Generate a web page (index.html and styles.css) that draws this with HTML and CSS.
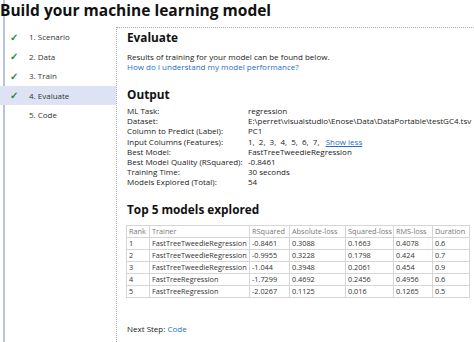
FILE: index.html
```html
<!DOCTYPE html>
<html>
<head>
<meta charset="utf-8">
<link rel="stylesheet" href="styles.css">
</head>
<body>
<div class="page">
  <h1 class="title">Build your machine learning model</h1>
  <div class="main">
    <nav class="steps">
      <div class="step"><span class="check">&#10003;</span><span>1. Scenario</span></div>
      <div class="step"><span class="check">&#10003;</span><span>2. Data</span></div>
      <div class="step"><span class="check">&#10003;</span><span>3. Train</span></div>
      <div class="step active"><span class="check">&#10003;</span><span>4. Evaluate</span></div>
      <div class="step"><span class="check"></span><span>5. Code</span></div>
    </nav>
    <section class="panel">
      <h2 class="h-eval">Evaluate</h2>
      <p class="intro">Results of training for your model can be found below.<br><a class="link" href="#">How do I understand my model performance?</a></p>
      <h2 class="h-out">Output</h2>
      <div class="kv">
        <span>ML Task:</span><span>regression</span>
        <span>Dataset:</span><span>E:\perret\visualstudio\Enose\Data\DataPortable\testGC4.tsv</span>
        <span>Column to Predict (Label):</span><span>PC1</span>
        <span>Input Columns (Features):</span><span>1, &nbsp;2, &nbsp;3, &nbsp;4, &nbsp;5, &nbsp;6, &nbsp;7, &nbsp;&nbsp;<a class="link ul" href="#">Show less</a></span>
        <span>Best Model:</span><span>FastTreeTweedieRegression</span>
        <span>Best Model Quality (RSquared):</span><span>-0.8461</span>
        <span>Training Time:</span><span>30 seconds</span>
        <span>Models Explored (Total):</span><span>54</span>
      </div>
      <h2 class="h-top">Top 5 models explored</h2>
      <table class="models">
        <colgroup>
          <col class="c-rank"><col class="c-tr"><col class="c-rs"><col class="c-al"><col class="c-sl"><col class="c-rms"><col class="c-du">
        </colgroup>
        <thead>
          <tr><th>Rank</th><th>Trainer</th><th>RSquared</th><th>Absolute-loss</th><th>Squared-loss</th><th>RMS-loss</th><th>Duration</th></tr>
        </thead>
        <tbody>
          <tr><td>1</td><td>FastTreeTweedieRegression</td><td>-0.8461</td><td>0.3088</td><td>0.1663</td><td>0.4078</td><td>0.6</td></tr>
          <tr><td>2</td><td>FastTreeTweedieRegression</td><td>-0.9955</td><td>0.3228</td><td>0.1798</td><td>0.424</td><td>0.7</td></tr>
          <tr><td>3</td><td>FastTreeTweedieRegression</td><td>-1.044</td><td>0.3948</td><td>0.2061</td><td>0.454</td><td>0.9</td></tr>
          <tr><td>4</td><td>FastTreeRegression</td><td>-1.7299</td><td>0.4692</td><td>0.2456</td><td>0.4956</td><td>0.6</td></tr>
          <tr><td>5</td><td>FastTreeRegression</td><td>-2.0267</td><td>0.1125</td><td>0.016</td><td>0.1265</td><td>0.5</td></tr>
        </tbody>
      </table>
      <p class="next">Next Step: <a class="link" href="#">Code</a></p>
    </section>
  </div>
</div>
</body>
</html>
```
FILE: styles.css
```css
html, body {
  margin: 0;
  padding: 0;
  background: #fff;
}
body {
  font-family: "Open Sans", "Noto Sans", sans-serif;
  color: #222;
  font-size: 8px;
  width: 474px;
  height: 342px;
  overflow: hidden;
}
.page {
  height: 342px;
  border-left: 2px solid #b9c2d6;
  margin-left: 3px;
}
.title {
  margin: 0 0 0 -5px;
  height: 27px;
  font-size: 15.5px;
  font-weight: 700;
  line-height: 21px;
  color: #111;
  white-space: nowrap;
}
.main {
  display: flex;
}
.steps {
  width: 116px;
  flex: none;
  margin-left: -5px;
}
.step {
  display: flex;
  align-items: center;
  height: 19.5px;
  font-size: 8px;
  color: #333;
}
.step.active {
  background: #dde2f4;
}
.check {
  width: 29px;
  padding-left: 10px;
  box-sizing: border-box;
  color: #2e8b3a;
  font-size: 10px;
  font-weight: 700;
}
.panel {
  flex: 1;
  border-left: 1px dotted #aaa;
  border-top: 1px dotted #aaa;
  padding: 1px 0 0 10px;
  height: 315px;
  box-sizing: border-box;
}
h2 {
  margin: 0;
  font-weight: 700;
  color: #111;
  font-size: 11.8px;
  line-height: 16px;
}
.h-eval {
  margin-bottom: 7px;
}
.intro {
  margin: 0;
  line-height: 10px;
}
.link {
  color: #1f6fc5;
  text-decoration: none;
}
.link.ul {
  text-decoration: underline;
}
.h-out {
  margin-top: 14px;
  margin-bottom: 4px;
}
.kv {
  display: grid;
  grid-template-columns: 121px auto;
  line-height: 10.2px;
  white-space: nowrap;
}
.h-top {
  margin-top: 13px;
  margin-bottom: 8px;
}
.models {
  border-collapse: collapse;
  table-layout: fixed;
  border: 1px solid #c4c4c4;
  width: 343px;
  margin-left: -1px;
  font-size: 7.3px;
}
.models th, .models td {
  border: 1px solid #d6d6d6;
  padding: 0 2px;
  height: 11px;
  line-height: 11px;
  text-align: left;
  white-space: nowrap;
  overflow: hidden;
}
.models th {
  font-weight: 400;
  color: #777;
  height: 11.6px;
}
.models td {
  color: #333;
}
.c-rank { width: 23px; }
.c-tr { width: 100px; }
.c-rs { width: 40px; }
.c-al { width: 56px; }
.c-sl { width: 48px; }
.c-rms { width: 39px; }
.c-du { width: 37px; }
.next {
  margin: 25.5px 0 0 0;
  line-height: 10px;
}
```
